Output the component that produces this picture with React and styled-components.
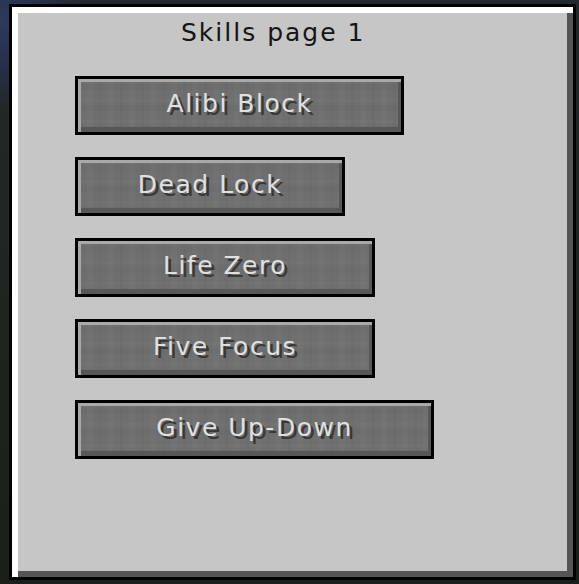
import React from 'react';
import styled, { createGlobalStyle } from 'styled-components';

const GlobalStyle = createGlobalStyle`
  html, body {
    margin: 0;
    padding: 0;
    background: #1c211d;
  }
  body {
    width: 579px;
    height: 584px;
    overflow: hidden;
    background:
      radial-gradient(circle at 0px 20px, #2c3a5c 0, #26314c 40px, transparent 90px),
      linear-gradient(180deg, #24282a 0%, #1d241f 60%, #1a1f1b 100%);
  }
`;

const Screen = styled.div`
  padding: 4px 0 0 9px;
  font-family: 'DejaVu Sans', 'Liberation Sans', sans-serif;
`;

const Panel = styled.div`
  box-sizing: border-box;
  width: 567px;
  height: 576px;
  border: 3px solid #000;
  background: #c6c6c6;
  box-shadow: inset 6px 6px 0 #ffffff, inset -6px -6px 0 #555555;
  padding: 11px 6px 6px 6px;
  display: flex;
  flex-direction: column;
`;

const Title = styled.div`
  margin-left: 163px;
  font-size: 25px;
  line-height: 29px;
  letter-spacing: 2px;
  color: #151515;
`;

const ButtonList = styled.div`
  display: flex;
  flex-direction: column;
  align-items: flex-start;
  gap: 22px;
  margin: 29px 0 0 57px;
`;

const SkillButton = styled.button`
  box-sizing: border-box;
  width: ${p => p.$w}px;
  height: 59px;
  border: 3px solid #000;
  padding: 0 0 4px 0;
  background-color: #6f6f6f;
  background-image:
    repeating-linear-gradient(90deg, rgba(0,0,0,0.025) 0 3px, transparent 3px 9px, rgba(255,255,255,0.02) 9px 15px, transparent 15px 21px),
    repeating-linear-gradient(0deg, rgba(0,0,0,0.025) 0 6px, transparent 6px 9px, rgba(255,255,255,0.02) 9px 12px, transparent 12px 21px);
  box-shadow: inset 3px 3px 0 #a9a9a9, inset -3px -5px 0 #575757;
  display: flex;
  align-items: center;
  justify-content: center;
  font-family: 'DejaVu Sans', 'Liberation Sans', sans-serif;
  font-size: 25px;
  line-height: 29px;
  letter-spacing: 1.5px;
  color: #e0e0e0;
  text-shadow: 3px 3px 0 #383838;
  cursor: pointer;
`;

const skills = [
  { name: 'Alibi Block', w: 329 },
  { name: 'Dead Lock', w: 270 },
  { name: 'Life Zero', w: 300 },
  { name: 'Five Focus', w: 300 },
  { name: 'Give Up-Down', w: 359 },
];

export default function App() {
  return (
    <>
      <GlobalStyle />
      <Screen>
        <Panel>
          <Title>Skills page 1</Title>
          <ButtonList>
            {skills.map(s => (
              <SkillButton key={s.name} $w={s.w}>{s.name}</SkillButton>
            ))}
          </ButtonList>
        </Panel>
      </Screen>
    </>
  );
}
